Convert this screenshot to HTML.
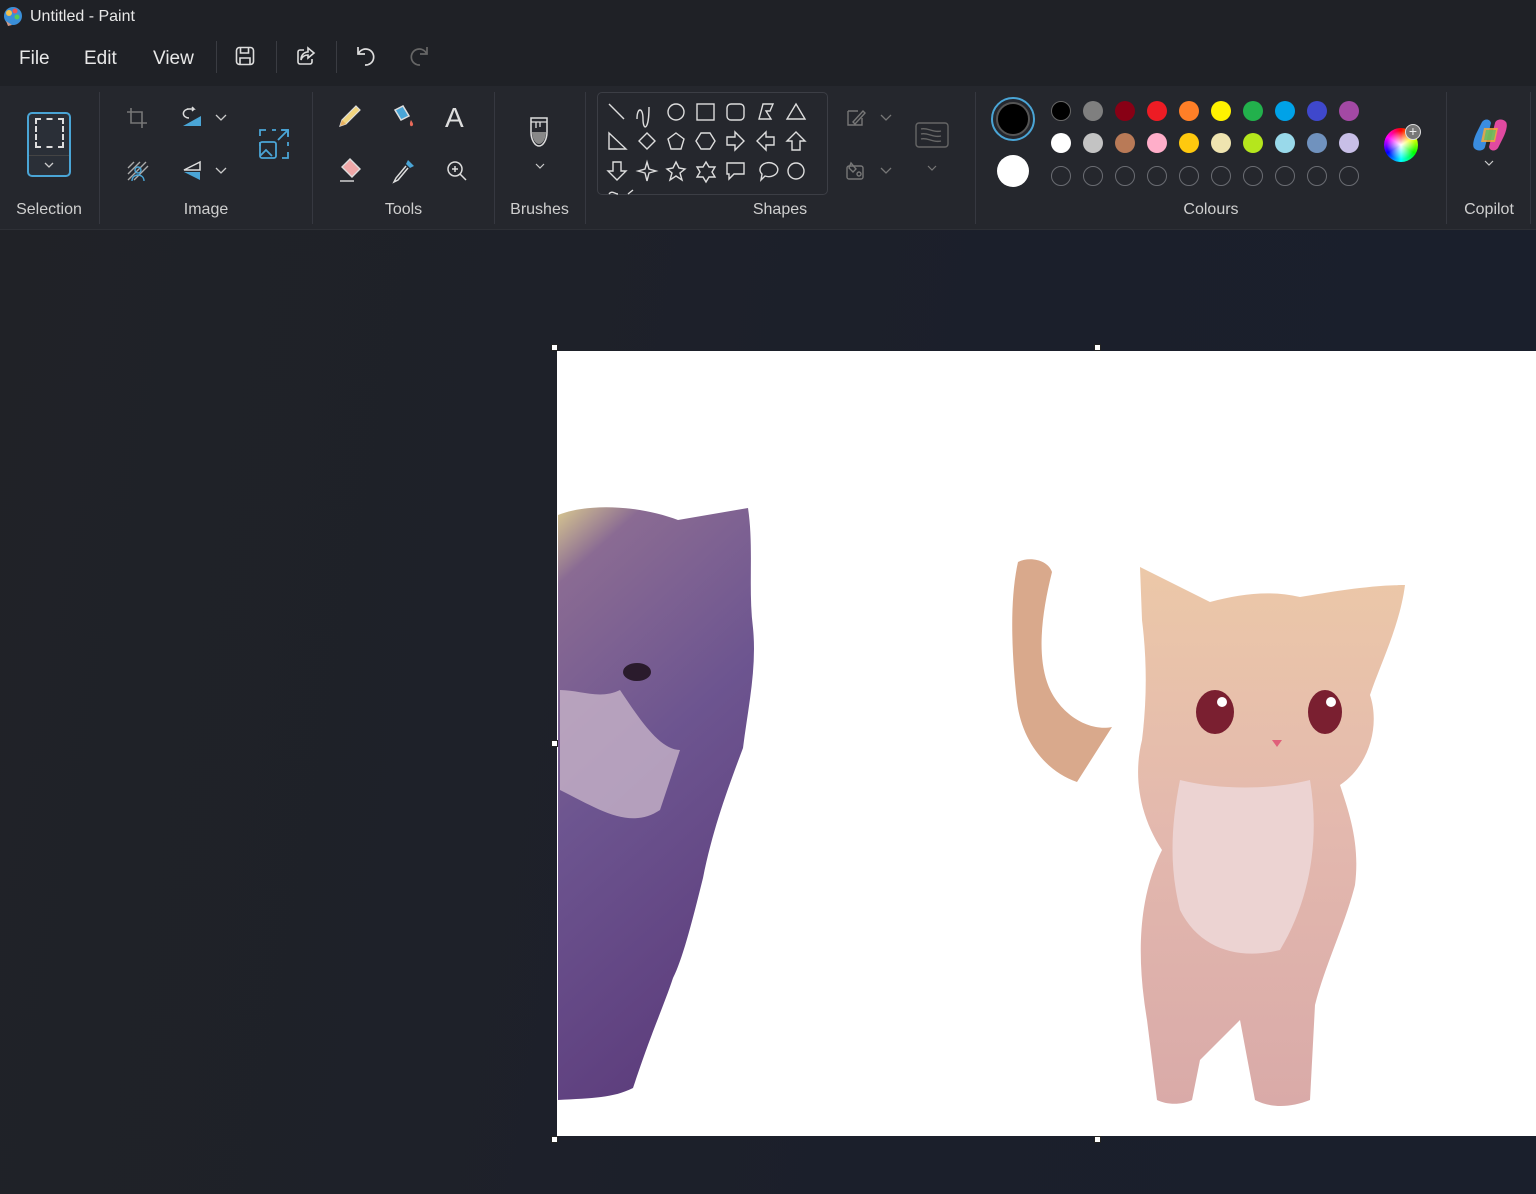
<!DOCTYPE html>
<html><head><meta charset="utf-8"><style>
*{margin:0;padding:0;box-sizing:border-box}
body{width:1536px;height:1194px;overflow:hidden;background:linear-gradient(100deg,#202227 0%,#1e2129 35%,#1b1f2b 60%,#1a1f2c 100%);font-family:"Liberation Sans",sans-serif;color:#e6e6e6;position:relative}
.a{position:absolute}
#top{left:0;top:0;width:1536px;height:86px;background:#1f2126}
#rib{left:0;top:86px;width:1536px;height:144px;background:#25272d;border-bottom:1px solid #2e3036}
.t{font-size:19px;color:#e8e8e8}
.lbl{position:absolute;top:201px;font-size:16px;color:#cfcfcf;text-align:center}
.sep{position:absolute;top:92px;width:1px;height:132px;background:#363840}
.vs{position:absolute;top:41px;width:1px;height:32px;background:#3a3c42}
.c{position:absolute;width:20px;height:20px;border-radius:50%}
.e{position:absolute;width:20px;height:20px;border-radius:50%;border:1.5px solid #6a6c72}
.h{position:absolute;width:7px;height:7px;background:#fff;border:1px solid #222}
svg{position:absolute;overflow:visible}
</style></head><body>
<div id="top" class="a"></div>
<div id="rib" class="a"></div>
<svg style="left:2px;top:5px" width="22" height="22" viewBox="0 0 22 22"><circle cx="11" cy="11" r="9" fill="#3a8fd8"/><circle cx="7" cy="8" r="3" fill="#f2c14e"/><circle cx="13" cy="6" r="2.5" fill="#e55"/><circle cx="15" cy="12" r="2.5" fill="#5c5"/><path d="M4 16 L10 20 L6 21Z" fill="#c98"/></svg>
<div class="a" style="left:30px;top:8px;font-size:16px;color:#e8e8e8">Untitled - Paint</div>
<div class="a t" style="left:19px;top:48px">File</div>
<div class="a t" style="left:84px;top:48px">Edit</div>
<div class="a t" style="left:153px;top:48px">View</div>
<div class="vs" style="left:216px"></div><div class="vs" style="left:276px"></div><div class="vs" style="left:336px"></div>
<svg style="left:235px;top:46px" width="20" height="20" viewBox="0 0 20 20" fill="none" stroke="#ddd" stroke-width="1.6"><rect x="1.5" y="1.5" width="17" height="17" rx="3"/><path d="M5.5 2v5h8V2M5 18v-6h10v6"/></svg>
<svg style="left:296px;top:46px" width="20" height="20" viewBox="0 0 20 20" fill="none" stroke="#ddd" stroke-width="1.6"><path d="M8 4H4a2 2 0 0 0-2 2v10a2 2 0 0 0 2 2h10a2 2 0 0 0 2-2v-3"/><path d="M12 2l6 5-6 5V9c-4 0-6 2-7 5 0-5 3-8 7-8z"/></svg>
<svg style="left:356px;top:45px" width="20" height="22" viewBox="0 0 20 22" fill="none" stroke="#ddd" stroke-width="1.7"><path d="M2 2v7h7"/><path d="M2.5 8.5A8 8 0 1 1 9 20"/></svg>
<svg style="left:409px;top:45px" width="20" height="22" viewBox="0 0 20 22" fill="none" stroke="#666" stroke-width="1.7"><path d="M18 2v7h-7"/><path d="M17.5 8.5A8 8 0 1 0 11 20"/></svg>
<div class="a" style="left:27px;top:112px;width:44px;height:65px;border:2px solid #4aa5d6;border-radius:5px;background:#2a2f37"></div>
<div class="a" style="left:35px;top:118px;width:29px;height:30px;border:2px dashed #ddd"></div>
<div class="a" style="left:29px;top:155px;width:40px;height:1px;background:#444"></div>
<svg style="left:44px;top:162px" width="10" height="6"><path d="M1 1l4 4 4-4" stroke="#ccc" fill="none" stroke-width="1.3"/></svg>
<div class="lbl" style="left:0;width:98px">Selection</div>
<div class="sep" style="left:99px"></div>
<svg style="left:126px;top:107px" width="22" height="22" viewBox="0 0 22 22" fill="none" stroke="#777" stroke-width="1.6"><path d="M5 1v15h16M1 5h15v16"/></svg>
<svg style="left:181px;top:106px" width="22" height="22" viewBox="0 0 22 22"><path d="M2 20L20 10V20Z" fill="#4aa5d6"/><path d="M6 3h7l-2-2M13 3 11 5M8 3a5 4 0 0 0 0 9" fill="none" stroke="#ddd" stroke-width="1.5"/></svg>
<svg style="left:215px;top:114px" width="12" height="7"><path d="M1 1l5 5 5-5" stroke="#ccc" fill="none" stroke-width="1.3"/></svg>
<svg style="left:126px;top:160px" width="24" height="22" viewBox="0 0 24 22" fill="none" stroke="#aaa" stroke-width="1.4"><path d="M2 8l6-6M2 14l12-12M2 20l18-18M8 20l14-14"/><circle cx="12" cy="10" r="3" stroke="#4aa5d6"/><path d="M6 21c0-4 3-6 6-6s6 2 6 6" stroke="#4aa5d6"/></svg>
<svg style="left:182px;top:160px" width="22" height="22" viewBox="0 0 22 22"><path d="M18 2L2 10h16Z" fill="none" stroke="#ddd" stroke-width="1.5"/><path d="M2 12h16v8Z" fill="#4aa5d6"/></svg>
<svg style="left:215px;top:167px" width="12" height="7"><path d="M1 1l5 5 5-5" stroke="#ccc" fill="none" stroke-width="1.3"/></svg>
<svg style="left:258px;top:128px" width="32" height="32" viewBox="0 0 32 32" fill="none" stroke="#4aa5d6" stroke-width="1.8"><path d="M2 8V2h6M14 2h4M24 2h6v6M30 14v4M30 24v6h-6M2 14v4"/><rect x="2" y="14" width="16" height="16" rx="2"/><path d="M2 28l6-6 6 6"/><path d="M20 12l10-10M23 2h7v7"/></svg>
<div class="lbl" style="left:100px;width:212px">Image</div>
<div class="sep" style="left:312px"></div>
<svg style="left:338px;top:104px" width="24" height="26" viewBox="0 0 24 26"><path d="M18 2l4 4L8 20l-6 2 2-6Z" fill="#f2d57e" stroke="#ddd" stroke-width="1.2"/><path d="M2 22l2-6 4 4Z" fill="#e8b060"/></svg>
<svg style="left:391px;top:104px" width="26" height="28" viewBox="0 0 26 28"><path d="M4 6l8-4 6 10-8 4Z" fill="#4aa5d6" stroke="#ddd" stroke-width="1.5"/><path d="M20 16c2 3 3 5 1 6s-3-2-1-6z" fill="#e86a5a"/></svg>
<div class="a" style="left:445px;top:102px;font-size:28px;color:#ddd">A</div>
<svg style="left:338px;top:157px" width="26" height="26" viewBox="0 0 26 26"><path d="M12 2l10 10-8 8-10-10Z" fill="#f0a8a8" stroke="#ddd" stroke-width="1.4"/><path d="M2 24h14" stroke="#ddd" stroke-width="1.4"/></svg>
<svg style="left:392px;top:158px" width="24" height="26" viewBox="0 0 24 26"><path d="M16 2l6 6-4 2-4-4Z" fill="#4aa5d6"/><path d="M14 8L4 20l-2 4 4-2L16 10" fill="none" stroke="#ddd" stroke-width="1.5"/></svg>
<svg style="left:446px;top:160px" width="22" height="22" viewBox="0 0 22 22" fill="none" stroke="#ddd" stroke-width="1.5"><circle cx="9" cy="9" r="7"/><path d="M14 14l6 6M9 6v6M6 9h6"/></svg>
<div class="lbl" style="left:313px;width:181px">Tools</div>
<div class="sep" style="left:494px"></div>
<svg style="left:528px;top:116px" width="22" height="34" viewBox="0 0 22 34"><path d="M3 2h16v14c0 8-4 14-8 14S3 24 3 16Z" fill="none" stroke="#ddd" stroke-width="1.5"/><path d="M4 16h14c0 6-3 12-7 12S4 22 4 16Z" fill="#888"/><path d="M3 6h16M8 6v6M12 6v5" stroke="#ddd" stroke-width="1.3"/></svg>
<svg style="left:535px;top:163px" width="10" height="6"><path d="M1 1l4 4 4-4" stroke="#ccc" fill="none" stroke-width="1.2"/></svg>
<div class="lbl" style="left:495px;width:89px">Brushes</div>
<div class="sep" style="left:585px"></div>
<div class="a" style="left:597px;top:92px;width:231px;height:103px;border:1px solid #3c3e45;border-radius:5px"></div>
<svg style="left:606px;top:101px" width="210" height="95" viewBox="0 0 210 95" fill="none" stroke="#ddd" stroke-width="1.4">
<path d="M3 3l15 15"/><path d="M31 18c0-12 6-12 6 0s6 12 6-12"/><circle cx="70" cy="11" r="8"/><rect x="91" y="3" width="17" height="16"/><rect x="121" y="3" width="17" height="16" rx="4"/><path d="M153 18l4-15h10l-3 7h-4l5 8Z"/><path d="M190 3l-9 15h18Z"/>
<path d="M3 32v16h17Z"/><path d="M41 32l8 8-8 8-8-8Z"/><path d="M70 32l8 6-3 10h-10l-3-10Z"/><path d="M95 32h9l5 8-5 8h-9l-5-8Z"/><path d="M121 36h8v-5l9 9-9 9v-5h-8Z"/><path d="M168 36h-8v-5l-9 9 9 9v-5h8Z"/><path d="M190 31l9 9h-5v9h-8v-9h-5Z"/>
<path d="M7 61h8v9h5l-9 9-9-9h5Z"/><path d="M41 61l2 7 7 2-7 2-2 8-2-8-7-2 7-2Z"/><path d="M70 61l3 6 6 1-5 4 2 7-6-4-6 4 2-7-5-4 6-1Z"/><path d="M100 61l3 5h6l-3 5 3 5h-6l-3 5-3-5h-6l3-5-3-5h6Z"/><path d="M121 62h17v11h-10l-5 5v-5h-2Z"/><path d="M160 62a9 7 0 1 1-1 13l-4 4 1-6a9 7 0 0 1 4-11Z"/><circle cx="190" cy="70" r="8"/>
<path d="M3 93c3-4 6 0 9 0M22 93l5-4"/></svg>
<svg style="left:845px;top:108px" width="22" height="20" viewBox="0 0 22 20" fill="none" stroke="#777" stroke-width="1.4"><path d="M3 3h10M3 3v14h14v-7M8 14l10-11 2 2-10 11Z"/></svg>
<svg style="left:880px;top:114px" width="12" height="7"><path d="M1 1l5 5 5-5" stroke="#777" fill="none" stroke-width="1.3"/></svg>
<svg style="left:845px;top:160px" width="22" height="20" viewBox="0 0 22 20" fill="none" stroke="#777" stroke-width="1.4"><rect x="2" y="6" width="16" height="13" rx="2"/><path d="M6 3l5 6-3 3-4-4Z"/><circle cx="14" cy="14" r="2"/></svg>
<svg style="left:880px;top:167px" width="12" height="7"><path d="M1 1l5 5 5-5" stroke="#777" fill="none" stroke-width="1.3"/></svg>
<svg style="left:915px;top:122px" width="34" height="26" viewBox="0 0 34 26" fill="none" stroke="#666" stroke-width="1.4"><rect x="1" y="1" width="32" height="24" rx="3"/><path d="M6 7c6-2 12 4 20 2M6 12c6-2 12 4 20 2M6 17c6-2 12 4 20 2"/></svg>
<svg style="left:927px;top:165px" width="10" height="6"><path d="M1 1l4 4 4-4" stroke="#777" fill="none" stroke-width="1.2"/></svg>
<div class="lbl" style="left:586px;width:388px">Shapes</div>
<div class="sep" style="left:975px"></div>
<div class="a" style="left:991px;top:97px;width:44px;height:44px;border-radius:50%;border:2px solid #4aa5d6"></div>
<div class="a" style="left:996px;top:102px;width:34px;height:34px;border-radius:50%;background:#000;border:2px solid #555"></div>
<div class="a" style="left:997px;top:155px;width:32px;height:32px;border-radius:50%;background:#fff"></div>
<div class="c" style="left:1051px;top:101px;background:#000;border:1px solid #666"></div>
<div class="c" style="left:1083px;top:101px;background:#7f7f7f"></div>
<div class="c" style="left:1115px;top:101px;background:#880015"></div>
<div class="c" style="left:1147px;top:101px;background:#ed1c24"></div>
<div class="c" style="left:1179px;top:101px;background:#ff7f27"></div>
<div class="c" style="left:1211px;top:101px;background:#fff200"></div>
<div class="c" style="left:1243px;top:101px;background:#22b14c"></div>
<div class="c" style="left:1275px;top:101px;background:#00a2e8"></div>
<div class="c" style="left:1307px;top:101px;background:#3f48cc"></div>
<div class="c" style="left:1339px;top:101px;background:#a349a4"></div>
<div class="c" style="left:1051px;top:133px;background:#fff"></div>
<div class="c" style="left:1083px;top:133px;background:#c3c3c3"></div>
<div class="c" style="left:1115px;top:133px;background:#b97a57"></div>
<div class="c" style="left:1147px;top:133px;background:#ffaec9"></div>
<div class="c" style="left:1179px;top:133px;background:#ffc90e"></div>
<div class="c" style="left:1211px;top:133px;background:#efe4b0"></div>
<div class="c" style="left:1243px;top:133px;background:#b5e61d"></div>
<div class="c" style="left:1275px;top:133px;background:#99d9ea"></div>
<div class="c" style="left:1307px;top:133px;background:#7092be"></div>
<div class="c" style="left:1339px;top:133px;background:#c8bfe7"></div>
<div class="e" style="left:1051px;top:166px"></div><div class="e" style="left:1083px;top:166px"></div><div class="e" style="left:1115px;top:166px"></div><div class="e" style="left:1147px;top:166px"></div><div class="e" style="left:1179px;top:166px"></div><div class="e" style="left:1211px;top:166px"></div><div class="e" style="left:1243px;top:166px"></div><div class="e" style="left:1275px;top:166px"></div><div class="e" style="left:1307px;top:166px"></div><div class="e" style="left:1339px;top:166px"></div>
<div class="a" style="left:1384px;top:128px;width:34px;height:34px;border-radius:50%;background:radial-gradient(circle,#fff 0%,rgba(255,255,255,0) 60%),conic-gradient(#f00,#ff0,#0f0,#0ff,#00f,#f0f,#f00)"></div>
<div class="a" style="left:1405px;top:124px;width:16px;height:16px;border-radius:50%;background:#777;border:1.5px solid #ddd;color:#eee;font-size:14px;line-height:12px;text-align:center">+</div>
<div class="lbl" style="left:976px;width:470px">Colours</div>
<div class="sep" style="left:1446px"></div>
<svg style="left:1472px;top:118px" width="36" height="34" viewBox="0 0 36 34"><path d="M10 4c3-4 8-3 9 1l-6 24c-1 4-8 5-11 1-2-3 0-10 3-16Z" fill="#3a8de0"/><path d="M26 30c-3 4-8 3-9-1l6-24c1-4 8-5 11-1 2 3 0 10-3 16Z" fill="#e04aa0"/><path d="M12 10h14l-3 14H9Z" fill="#f2a93b" opacity=".85"/><path d="M14 12h10l-2 10h-10Z" fill="#46c46a" opacity=".7"/></svg>
<svg style="left:1484px;top:160px" width="10" height="6"><path d="M1 1l4 4 4-4" stroke="#ccc" fill="none" stroke-width="1.2"/></svg>
<div class="lbl" style="left:1447px;width:84px">Copilot</div>
<div class="sep" style="left:1530px"></div>
<div class="a" style="left:557px;top:351px;width:979px;height:785px;background:#fff"></div>
<div class="h" style="left:551px;top:344px"></div><div class="h" style="left:1094px;top:344px"></div><div class="h" style="left:551px;top:740px"></div><div class="h" style="left:551px;top:1136px"></div><div class="h" style="left:1094px;top:1136px"></div>
<svg style="left:0;top:0" width="1536" height="1194">
<defs>
<linearGradient id="pg" x1="0" y1="0" x2="0.3" y2="1"><stop offset="0" stop-color="#d8c890"/><stop offset=".12" stop-color="#8a6b93"/><stop offset=".5" stop-color="#6d5590"/><stop offset="1" stop-color="#5e3f7e"/></linearGradient>
<linearGradient id="og" x1="0" y1="0" x2="0" y2="1"><stop offset="0" stop-color="#ecc8a8"/><stop offset=".5" stop-color="#e3b8ae"/><stop offset="1" stop-color="#d9aaa8"/></linearGradient>
</defs>
<path d="M558 515c30-12 80-10 120 5l70-12c6 40 0 80 5 120 4 40-5 80-10 120-15 40-30 80-40 130-10 40-20 80-30 100-10 30-20 50-40 110-20 10-40 10-75 12Z" fill="url(#pg)"/>
<path d="M560 690c20 0 40 10 60 0 20 30 40 60 60 60l-20 60c-30 20-60 0-100-20Z" fill="#c7b3c8" opacity=".8"/>
<ellipse cx="637" cy="672" rx="14" ry="9" fill="#2a1b2c"/>
<path d="M1018 562c12-6 30-2 34 10-10 40-15 80-5 110 10 30 40 50 65 45l-35 55c-30-10-55-40-60-80-5-45-8-100 1-140Z" fill="#d9a98c"/>
<path d="M1140 567l70 35c30-8 60-12 90-5 30-5 70-12 105-12-5 40-25 80-35 110 10 30 0 70-30 90 10 30 20 60 15 100-10 40-30 80-40 120l-5 95c-20 8-40 8-55 0l-15-80-40 40-8 40c-10 5-25 5-35 0l-10-80c-10-60-10-120 15-170-20-30-30-70-20-110 5-40 5-80 0-120Z" fill="url(#og)"/>
<path d="M1180 780c40 10 90 10 130 0 10 60 0 120-30 170-40 10-80 0-100-40-10-40-10-80 0-130Z" fill="#ecd3d2"/>
<ellipse cx="1215" cy="712" rx="19" ry="22" fill="#7a1f30"/><ellipse cx="1325" cy="712" rx="17" ry="22" fill="#7a1f30"/>
<circle cx="1222" cy="702" r="5" fill="#fff"/><circle cx="1331" cy="702" r="5" fill="#fff"/>
<path d="M1272 740l10 0-5 7Z" fill="#e0607a"/>
</svg>
</body></html>
